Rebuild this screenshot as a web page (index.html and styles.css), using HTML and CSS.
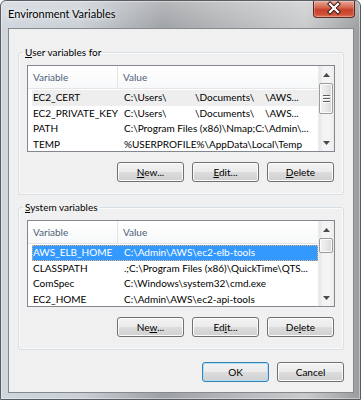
FILE: index.html
```html
<!DOCTYPE html>
<html lang="en">
<head>
  <meta charset="UTF-8" />
  <title>Environment Variables</title>
  <link rel="stylesheet" href="styles.css">
</head>
<body>
  <div class="window" role="dialog" aria-labelledby="dlg-title">
    <div class="titlebar">
      <span class="title" id="dlg-title">Environment Variables</span>
      <button class="close" aria-label="Close">
        <svg viewBox="0 0 42 17" width="42" height="17" aria-hidden="true">
          <path d="M17 4 L25 12 M25 4 L17 12" stroke="#3b1c18" stroke-width="4.2" stroke-linecap="square" fill="none"/>
          <path d="M17 4 L25 12 M25 4 L17 12" stroke="#ffffff" stroke-width="2.2" stroke-linecap="square" fill="none"/>
        </svg>
      </button>
    </div>

    <div class="client">
      <fieldset class="group">
        <legend><u>U</u>ser variables for</legend>
        <div class="listview">
          <div class="lv-main">
            <div class="lv-header">
              <span>Variable</span>
              <span>Value</span>
            </div>
            <div class="lv-row focus">
              <span>EC2_CERT</span>
              <span class="path"><i class="p1">C:\Users\</i><i class="p2">\Documents\</i><i>\AWS...</i></span>
            </div>
            <div class="lv-row">
              <span>EC2_PRIVATE_KEY</span>
              <span class="path"><i class="p1">C:\Users\</i><i class="p2">\Documents\</i><i>\AWS...</i></span>
            </div>
            <div class="lv-row">
              <span>PATH</span>
              <span>C:\Program Files (x86)\Nmap;C:\Admin\...</span>
            </div>
            <div class="lv-row">
              <span>TEMP</span>
              <span>%USERPROFILE%\AppData\Local\Temp</span>
            </div>
          </div>
          <div class="scrollbar">
            <div class="sb-btn">
              <svg viewBox="0 0 7 4" width="7" height="4"><path d="M0 4 L3.5 0 L7 4z" fill="#4a4a4a"/></svg>
            </div>
            <div class="sb-track">
              <div class="sb-thumb tall">
                <span></span><span></span><span></span>
              </div>
            </div>
            <div class="sb-btn">
              <svg viewBox="0 0 7 4" width="7" height="4"><path d="M0 0 L3.5 4 L7 0z" fill="#4a4a4a"/></svg>
            </div>
          </div>
        </div>
        <div class="buttons">
          <button class="btn"><u>N</u>ew...</button>
          <button class="btn"><u>E</u>dit...</button>
          <button class="btn"><u>D</u>elete</button>
        </div>
      </fieldset>

      <fieldset class="group">
        <legend><u>S</u>ystem variables</legend>
        <div class="listview">
          <div class="lv-main">
            <div class="lv-header">
              <span>Variable</span>
              <span>Value</span>
            </div>
            <div class="lv-row selected">
              <span>AWS_ELB_HOME</span>
              <span>C:\Admin\AWS\ec2-elb-tools</span>
            </div>
            <div class="lv-row">
              <span>CLASSPATH</span>
              <span>.;C:\Program Files (x86)\QuickTime\QTS...</span>
            </div>
            <div class="lv-row">
              <span>ComSpec</span>
              <span>C:\Windows\system32\cmd.exe</span>
            </div>
            <div class="lv-row">
              <span>EC2_HOME</span>
              <span>C:\Admin\AWS\ec2-api-tools</span>
            </div>
          </div>
          <div class="scrollbar">
            <div class="sb-btn">
              <svg viewBox="0 0 7 4" width="7" height="4"><path d="M0 4 L3.5 0 L7 4z" fill="#4a4a4a"/></svg>
            </div>
            <div class="sb-track">
              <div class="sb-thumb"></div>
            </div>
            <div class="sb-btn">
              <svg viewBox="0 0 7 4" width="7" height="4"><path d="M0 0 L3.5 4 L7 0z" fill="#4a4a4a"/></svg>
            </div>
          </div>
        </div>
        <div class="buttons">
          <button class="btn">Ne<u>w</u>...</button>
          <button class="btn">Ed<u>i</u>t...</button>
          <button class="btn">De<u>l</u>ete</button>
        </div>
      </fieldset>

      <div class="dialog-buttons">
        <button class="btn default">OK</button>
        <button class="btn">Cancel</button>
      </div>
    </div>
  </div>
</body>
</html>
```
FILE: styles.css
```css
body {
  margin: 0;
  font-family: "Lato", "Roboto", sans-serif;
  font-size: 10px;
  color: #000;
}
.window {
  width: 361px;
  height: 400px;
  box-sizing: border-box;
  border: 1px solid #595c60;
  border-radius: 6px 6px 0 0;
  padding: 0 6px 6px 7px;
  display: flex;
  flex-direction: column;
  background:
    linear-gradient(to bottom, rgba(255, 255, 255, 0.25), rgba(255, 255, 255, 0) 30px),
    linear-gradient(to right, #cfd6dd 0%, #c9cfd5 22%, #9ea1a4 45%, #b0b2b5 60%, #c8cacc 85%, #9a9c9e 100%);
  box-shadow: inset 0 0 0 1px rgba(255, 255, 255, 0.4);
}
.titlebar {
  height: 27px;
  display: flex;
  align-items: flex-start;
  flex-shrink: 0;
}
.title {
  font-size: 11px;
  line-height: 14px;
  padding-top: 6px;
  text-shadow: 0 0 6px rgba(255, 255, 255, 0.9), 0 0 3px rgba(255, 255, 255, 0.7);
}
.close {
  margin-left: auto;
  margin-right: -1px;
  width: 42px;
  height: 17px;
  padding: 0;
  border: 1px solid #5e2b22;
  border-top: none;
  border-radius: 0 0 4px 4px;
  background: linear-gradient(to bottom, #e8a999 0%, #d6684f 40%, #c7412a 55%, #d05238 85%, #e07a5f 100%);
  box-shadow: inset 0 0 0 1px rgba(255, 255, 255, 0.25);
}
.close svg {
  display: block;
  margin: -1px 0 0 -1px;
}
.client {
  flex: 1;
  background: #f0f0f0;
  border: 1px solid #84898f;
  padding: 16px 9px 0 9px;
  display: flex;
  flex-direction: column;
}
.group {
  margin: 0 0 5px 0;
  padding: 6px 8px 12px 8px;
  border: 1px solid #d5dfe5;
  border-radius: 3px;
  box-shadow: inset 0 0 0 1px #fafafa;
}
.group legend {
  padding: 0 2px;
  margin-left: -4px;
  line-height: 14px;
  color: #000;
}
.listview {
  height: 87px;
  box-sizing: border-box;
  border: 1px solid #828790;
  background: #fff;
  display: flex;
}
.lv-main {
  flex: 1;
  overflow: hidden;
}
.lv-header {
  height: 22px;
  display: grid;
  grid-template-columns: 90px 1fr;
  align-items: stretch;
  border-bottom: 1px solid #e5e5e5;
  background: linear-gradient(to bottom, #ffffff, #f7f8f9);
  color: #4c607a;
  margin-bottom: 1px;
}
.lv-header span {
  padding-left: 5px;
  line-height: 22px;
}
.lv-header span:first-child {
  border-right: 1px solid #e5e5e5;
}
.lv-row {
  display: grid;
  grid-template-columns: 86px 1fr;
  height: 15.5px;
  line-height: 15.5px;
  margin-left: 4px;
  white-space: nowrap;
  box-sizing: border-box;
}
.lv-row span:first-child {
  padding-left: 1px;
}
.lv-row span:last-child {
  padding-left: 6px;
}
.lv-row.focus {
  background: #eeeeee;
}
.lv-row.selected {
  background: #3399ff;
  color: #fff;
  outline: 1px dotted #e9b27a;
  outline-offset: -1px;
}
.path {
  display: flex;
}
.path i {
  font-style: normal;
}
.path .p1 {
  width: 71px;
}
.path .p2 {
  width: 70px;
}
.scrollbar {
  width: 16px;
  display: flex;
  flex-direction: column;
  background: linear-gradient(to right, #e6e6e6, #f4f4f4 30%, #f4f4f4 70%, #ececec);
  border-left: 1px solid #ededed;
  box-sizing: border-box;
}
.sb-btn {
  height: 17px;
  display: flex;
  align-items: center;
  justify-content: center;
  flex-shrink: 0;
}
.sb-btn svg {
  display: block;
}
.sb-track {
  flex: 1;
  padding: 0 1px 0 0;
}
.sb-thumb {
  height: 15px;
  box-sizing: border-box;
  border: 1px solid #9b9b9b;
  border-radius: 2px;
  background: linear-gradient(to right, #f3f3f3, #e8e8e8 50%, #d8d8d8);
  box-shadow: inset 0 0 0 1px #fbfbfb;
}
.sb-thumb.tall {
  height: 31px;
  display: flex;
  flex-direction: column;
  align-items: center;
  justify-content: center;
  gap: 1px;
}
.sb-thumb.tall span {
  width: 7px;
  height: 1px;
  background: #5f5f5f;
  border-bottom: 1px solid #ffffff;
}
.buttons {
  display: flex;
  justify-content: flex-end;
  gap: 8px;
  margin-top: 10px;
  padding-right: 1px;
}
.btn {
  width: 67px;
  height: 20px;
  padding: 0;
  font-family: inherit;
  font-size: 10px;
  color: #000;
  border: 1px solid #707070;
  border-radius: 3px;
  background: linear-gradient(to bottom, #f2f2f2 0%, #ebebeb 50%, #dddddd 50%, #cfcfcf 100%);
  box-shadow: inset 0 0 0 1px #fcfcfc;
}
.btn.default {
  border-color: #3c7fb1;
  box-shadow: inset 0 0 0 1px #a9e1f8;
}
.dialog-buttons {
  display: flex;
  justify-content: flex-end;
  gap: 8px;
  margin-top: 7px;
}
```
